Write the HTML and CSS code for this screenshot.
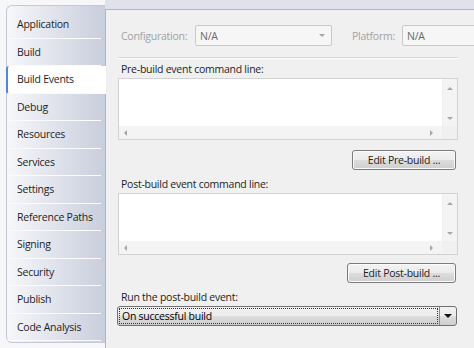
FILE: index.html
```html
<!DOCTYPE html>
<html lang="en">
<head>
  <meta charset="UTF-8">
  <title>Build Events</title>
  <link rel="stylesheet" href="styles.css">
</head>
<body>
  <div class="window">
    <!-- tabs -->
    <ul class="tabs">
      <li>Application</li>
      <li>Build</li>
      <li class="active">Build Events</li>
      <li>Debug</li>
      <li>Resources</li>
      <li>Services</li>
      <li>Settings</li>
      <li>Reference Paths</li>
      <li>Signing</li>
      <li>Security</li>
      <li>Publish</li>
      <li>Code Analysis</li>
    </ul>

    <!-- page -->
    <div class="page-wrap">
      <div class="page">
        <div class="config-row">
          <span class="dim-label">Configuration:</span>
          <div class="combo combo-config"><span>N/A</span><i class="tri tri-down"></i></div>
          <span class="dim-label plat">Platform:</span>
          <div class="combo combo-plat"><span>N/A</span></div>
        </div>
        <div class="divider"></div>

        <div class="label">Pre-build event command line:</div>
        <div class="cmd-box">
          <div class="cmd-main">
            <div class="cmd-text"></div>
            <div class="vscroll"><i class="tri tri-up"></i><i class="tri tri-down"></i></div>
          </div>
          <div class="hscroll"><i class="tri tri-left"></i><i class="tri tri-right"></i><span class="corner"></span></div>
        </div>
        <div class="btn-row"><button class="btn btn-pre">Edit Pre-build ...</button></div>

        <div class="label">Post-build event command line:</div>
        <div class="cmd-box">
          <div class="cmd-main">
            <div class="cmd-text"></div>
            <div class="vscroll"><i class="tri tri-up"></i><i class="tri tri-down"></i></div>
          </div>
          <div class="hscroll"><i class="tri tri-left"></i><i class="tri tri-right"></i><span class="corner"></span></div>
        </div>
        <div class="btn-row"><button class="btn btn-post">Edit Post-build ...</button></div>

        <div class="label">Run the post-build event:</div>
        <div class="run-select">
          <div class="run-value"><span>On successful build</span></div>
          <div class="run-arrow"><i class="tri tri-down dark"></i></div>
        </div>
      </div>
    </div>
  </div>
</body>
</html>
```

FILE: styles.css
```css
body { margin: 0; background: #f7f7f9; font-family: 'Open Sans', 'Noto Sans', sans-serif; font-size: 10.5px; letter-spacing: -0.25px; color: #1e1e1e; overflow: hidden; }
.window { display: flex; height: 348px; }

/* tabs */
.tabs { list-style: none; margin: 5px 0 5px 6px; padding: 5px 0 0; width: 99px; flex: none; background: linear-gradient(to right, #f6f7fa, #c9cedd); border: 1px solid #c4c9d8; border-right: 0; border-radius: 6px 0 0 6px; box-sizing: border-box; }
.tabs li { height: 27.5px; line-height: 27px; padding-left: 10px; margin-right: 4px; border-bottom: 1px solid #fbfbfd; box-sizing: border-box; white-space: nowrap; }
.tabs li.active { background: #fff; margin: 0 -1px 0 -1px; padding-left: 9px; border-left: 2px solid #4a8ad6; border-radius: 3px 0 0 3px; position: relative; z-index: 1; }

/* page */
.page-wrap { flex: 1; background: #dfe2ea; padding-top: 9px; overflow: hidden; }
.page { height: 100%; background: #f0f0f0; border-top: 1px solid #aeb6c8; border-left: 1px solid #aeb6c8; padding: 0 16px 0 12px; box-sizing: border-box; display: flex; flex-direction: column; }

.config-row { display: flex; align-items: center; margin-top: 15px; height: 21px; white-space: nowrap; }
.dim-label { color: #a2a2a2; padding-left: 3px; width: 77px; flex: none; box-sizing: border-box; }
.dim-label.plat { width: 53px; margin-left: 17px; }
.combo { height: 21px; box-sizing: border-box; border: 1px solid #c9c9c9; border-radius: 2px; background: #f6f6f6; color: #6a6a6a; display: flex; align-items: center; padding-left: 4px; flex: none; position: relative; }
.combo-config { width: 137px; }
.combo-plat { width: 90px; }
.combo .tri { position: absolute; right: 6px; top: 8px; }

.divider { margin-top: 11px; height: 1px; border-top: 1px solid #d5d5d5; background: #fff; }

.label { margin-top: 3px; line-height: 15px; padding-left: 3px; margin-bottom: 1px; }
.btn-row + .label { margin-top: 7px; }

.cmd-box { height: 62px; box-sizing: border-box; border: 1px solid #d2d2d2; background: #fff; display: flex; flex-direction: column; }
.cmd-main { flex: 1; display: flex; }
.cmd-text { flex: 1; }
.vscroll { width: 15px; background: #f4f4f4; display: flex; flex-direction: column; justify-content: space-between; align-items: center; padding: 8px 0 6px; box-sizing: border-box; border-left: 1px solid #f0f0f0; }
.hscroll { height: 13px; background: #f4f4f4; display: flex; align-items: center; justify-content: space-between; padding: 0 0 0 5px; }
.hscroll .corner { width: 15px; height: 13px; background: #f0f0f0; }
.hscroll .tri-right { margin-left: auto; margin-right: 9px; }

/* small arrow glyphs */
.tri { display: block; width: 0; height: 0; }
.tri-up { border-left: 3px solid transparent; border-right: 3px solid transparent; border-bottom: 3px solid #a6a6a6; }
.tri-down { border-left: 3px solid transparent; border-right: 3px solid transparent; border-top: 3px solid #a6a6a6; }
.tri-left { border-top: 3px solid transparent; border-bottom: 3px solid transparent; border-right: 3px solid #a6a6a6; }
.tri-right { border-top: 3px solid transparent; border-bottom: 3px solid transparent; border-left: 3px solid #a6a6a6; }
.tri-down.dark { border-left-width: 4px; border-right-width: 4px; border-top: 4px solid #111; }

.btn-row { display: flex; justify-content: flex-end; margin-top: 10px; padding-right: 2px; }
.btn-row + .label + .cmd-box + .btn-row { margin-top: 8px; }
.btn { font-family: inherit; font-size: 10.5px; letter-spacing: -0.25px; color: #1e1e1e; height: 20px; padding: 0; border: 1px solid #7b7b7b; border-radius: 3px; background: linear-gradient(to bottom, #f3f3f3 0%, #ebebeb 50%, #dddddd 51%, #cfcfcf 100%); box-shadow: inset 0 0 0 1px #fbfbfb; }
.btn-pre { width: 104px; }
.btn-post { width: 109px; }

.run-select { margin-top: 0; height: 20px; display: flex; border: 1px solid #707070; border-radius: 3px; background: linear-gradient(to bottom, #f2f2f2 0%, #ebebeb 50%, #dddddd 51%, #cfcfcf 100%); margin-left: -1px; margin-right: 1px; box-sizing: border-box; }
.run-value { flex: 1; padding: 1px; }
.run-value span { display: flex; align-items: center; height: 100%; box-sizing: border-box; border: 1px dotted #333; padding-left: 2px; color: #000; }
.run-arrow { width: 16px; border-left: 1px solid #8a8a8a; display: flex; align-items: center; justify-content: center; }
```
